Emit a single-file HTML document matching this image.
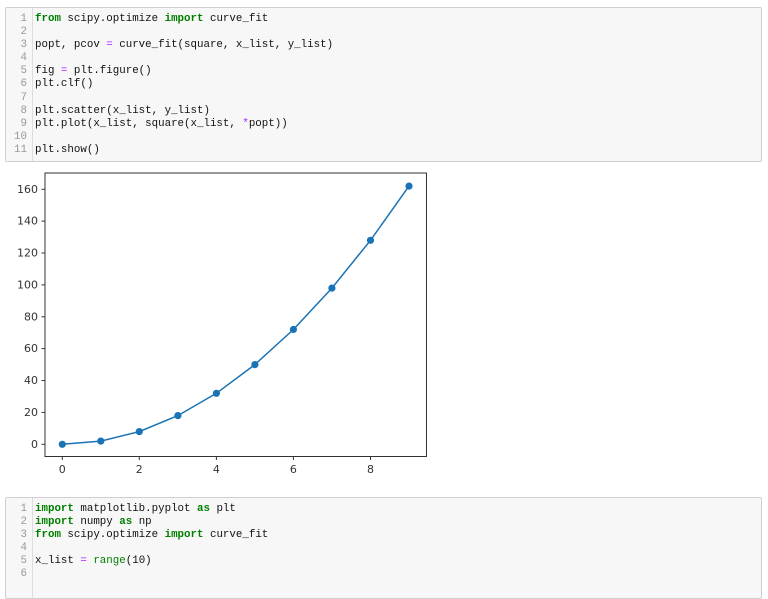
<!DOCTYPE html>
<html><head><style>
body{margin:0;background:#fff;width:768px;height:578px;overflow:hidden;position:relative;font-family:"Liberation Sans",sans-serif}
.cell{position:absolute;left:5px;width:755px;background:#f7f7f7;border:1px solid #cfcfcf;border-radius:2px}
.g{position:absolute;left:0;top:0;bottom:0;width:26px;border-right:1px solid #ddd;background:#f7f7f7}
pre{margin:0;font-family:"Liberation Mono",monospace;font-size:10.8px;line-height:13.1px;color:#111}
.ln{position:absolute;left:0;width:21px;text-align:right;color:#999;top:5px}
.code{position:absolute;left:29px;top:5px}
.k{color:#008000;font-weight:bold}.o{color:#aa22ff}.b{color:#008000}.n{color:#080}
</style></head><body>
<div class="cell" style="top:7px;height:153px">
<div class="g"></div>
<pre class="ln">1
2
3
4
5
6
7
8
9
10
11</pre>
<pre class="code"><span class="k">from</span> scipy.optimize <span class="k">import</span> curve_fit

popt, pcov <span class="o">=</span> curve_fit(square, x_list, y_list)

fig <span class="o">=</span> plt.figure()
plt.clf()

plt.scatter(x_list, y_list)
plt.plot(x_list, square(x_list, <span class="o">*</span>popt))

plt.show()</pre>
</div>
<svg style="position:absolute;left:0;top:0" width="768" height="578">
<rect x="45" y="173" width="381.5" height="283.5" fill="none" stroke="#333" stroke-width="1"/>
<g stroke="#333" stroke-width="1">
<line x1="62.3" y1="456.5" x2="62.3" y2="460"/><line x1="139.3" y1="456.5" x2="139.3" y2="460"/><line x1="216.4" y1="456.5" x2="216.4" y2="460"/><line x1="293.4" y1="456.5" x2="293.4" y2="460"/><line x1="370.5" y1="456.5" x2="370.5" y2="460"/>
<line x1="41.5" y1="444.3" x2="45" y2="444.3"/><line x1="41.5" y1="412.4" x2="45" y2="412.4"/><line x1="41.5" y1="380.5" x2="45" y2="380.5"/><line x1="41.5" y1="348.6" x2="45" y2="348.6"/><line x1="41.5" y1="316.8" x2="45" y2="316.8"/><line x1="41.5" y1="284.9" x2="45" y2="284.9"/><line x1="41.5" y1="253" x2="45" y2="253"/><line x1="41.5" y1="221.1" x2="45" y2="221.1"/><line x1="41.5" y1="189.3" x2="45" y2="189.3"/>
</g>
<g font-family="DejaVu Sans, sans-serif" font-size="11" fill="#333" text-anchor="middle">
<text x="62.3" y="473">0</text><text x="139.3" y="473">2</text><text x="216.4" y="473">4</text><text x="293.4" y="473">6</text><text x="370.5" y="473">8</text>
</g>
<g font-family="DejaVu Sans, sans-serif" font-size="11" fill="#333" text-anchor="end">
<text x="38" y="448">0</text><text x="38" y="416">20</text><text x="38" y="384">40</text><text x="38" y="352">60</text><text x="38" y="320.5">80</text><text x="38" y="288.5">100</text><text x="38" y="256.5">120</text><text x="38" y="224.5">140</text><text x="38" y="193">160</text>
</g>
<polyline fill="none" stroke="#1a73b5" stroke-width="1.5" points="62.3,444.3 100.8,441.1 139.3,431.6 177.9,415.6 216.4,393.3 254.9,364.6 293.4,329.5 331.9,288.1 370.5,240.3 409,186.1"/>
<g fill="#1a73b5">
<circle cx="62.3" cy="444.3" r="3.6"/><circle cx="100.8" cy="441.1" r="3.6"/><circle cx="139.3" cy="431.6" r="3.6"/><circle cx="177.9" cy="415.6" r="3.6"/><circle cx="216.4" cy="393.3" r="3.6"/><circle cx="254.9" cy="364.6" r="3.6"/><circle cx="293.4" cy="329.5" r="3.6"/><circle cx="331.9" cy="288.1" r="3.6"/><circle cx="370.5" cy="240.3" r="3.6"/><circle cx="409" cy="186.1" r="3.6"/>
</g>
</svg>
<div class="cell" style="top:497px;height:100px">
<div class="g"></div>
<pre class="ln">1
2
3
4
5
6</pre>
<pre class="code"><span class="k">import</span> matplotlib.pyplot <span class="k">as</span> plt
<span class="k">import</span> numpy <span class="k">as</span> np
<span class="k">from</span> scipy.optimize <span class="k">import</span> curve_fit

x_list <span class="o">=</span> <span class="b">range</span>(10)
</pre>
</div>
</body></html>
